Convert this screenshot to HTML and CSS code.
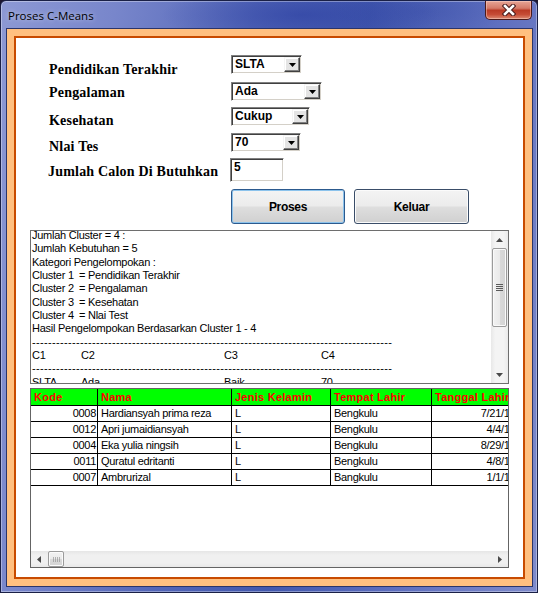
FILE: index.html
```html
<!DOCTYPE html>
<html>
<head>
<meta charset="utf-8">
<title>Proses C-Means</title>
<link rel="stylesheet" href="styles.css">
</head>
<body>
<div class="window">
  <div class="titlebar">
    <span class="title">Proses C-Means</span>
    <div class="close">
      <svg width="14" height="12" viewBox="0 0 14 12">
        <path d="M3 2 L11 10 M11 2 L3 10" stroke="#4a1c1c" stroke-width="4.6" stroke-linecap="square"/>
        <path d="M3 2 L11 10 M11 2 L3 10" stroke="#ffffff" stroke-width="2.6" stroke-linecap="square"/>
      </svg>
    </div>
  </div>
  <div class="client">
    <div class="panel">
      <div class="form">
        <div class="row row-pend">
          <span class="lbl lbl-pend">Pendidikan Terakhir</span>
          <div class="combo combo-slta"><span class="combo-val">SLTA</span><span class="drop"><svg width="7" height="4" viewBox="0 0 7 4"><path d="M0 0H7L3.5 4Z" fill="#000"/></svg></span></div>
        </div>
        <div class="row row-peng">
          <span class="lbl lbl-peng">Pengalaman</span>
          <div class="combo combo-ada"><span class="combo-val">Ada</span><span class="drop"><svg width="7" height="4" viewBox="0 0 7 4"><path d="M0 0H7L3.5 4Z" fill="#000"/></svg></span></div>
        </div>
        <div class="row row-kes">
          <span class="lbl lbl-kes">Kesehatan</span>
          <div class="combo combo-cukup"><span class="combo-val">Cukup</span><span class="drop"><svg width="7" height="4" viewBox="0 0 7 4"><path d="M0 0H7L3.5 4Z" fill="#000"/></svg></span></div>
        </div>
        <div class="row row-nilai">
          <span class="lbl lbl-nilai">Nlai Tes</span>
          <div class="combo combo-70"><span class="combo-val">70</span><span class="drop"><svg width="7" height="4" viewBox="0 0 7 4"><path d="M0 0H7L3.5 4Z" fill="#000"/></svg></span></div>
        </div>
        <div class="row row-jml">
          <span class="lbl lbl-jml">Jumlah Calon Di Butuhkan</span>
          <div class="textbox"><span class="combo-val">5</span></div>
        </div>
      </div>

      <div class="buttons">
        <button class="btn btn-default">Proses</button>
        <button class="btn btn-keluar">Keluar</button>
      </div>

      <div class="memo">
        <div class="memo-text">
          <div class="memo-lines">
            <div>Jumlah Cluster = 4 :</div>
            <div>Jumlah Kebutuhan = 5</div>
            <div>Kategori Pengelompokan :</div>
            <div><span class="tab-cl">Cluster 1</span>= Pendidikan Terakhir</div>
            <div><span class="tab-cl">Cluster 2</span>= Pengalaman</div>
            <div><span class="tab-cl">Cluster 3</span>= Kesehatan</div>
            <div><span class="tab-cl">Cluster 4</span>= Nlai Test</div>
            <div>Hasil Pengelompokan Berdasarkan Cluster 1 - 4</div>
            <div class="dash">------------------------------------------------------------------------------------------</div>
            <div><span class="c1">C1</span><span class="c2">C2</span><span class="c3">C3</span>C4</div>
            <div class="dash">------------------------------------------------------------------------------------------</div>
            <div><span class="c1">SLTA</span><span class="c2">Ada</span><span class="c3">Baik</span>70</div>
          </div>
        </div>
        <div class="vscroll">
          <div class="sb-btn"><svg width="7" height="4" viewBox="0 0 7 4"><path d="M0 4H7L3.5 0Z" fill="#4a4a4a"/></svg></div>
          <div class="vthumb"><span class="grip-v"></span></div>
          <div class="sb-space"></div>
          <div class="sb-btn"><svg width="7" height="4" viewBox="0 0 7 4"><path d="M0 0H7L3.5 4Z" fill="#4a4a4a"/></svg></div>
        </div>
      </div>

      <div class="grid">
        <div class="grid-body">
          <div class="gtable">
            <div class="grow ghead">
              <div class="gc">Kode</div><div class="gc">Nama</div><div class="gc">Jenis Kelamin</div><div class="gc">Tempat Lahir</div><div class="gc">Tanggal Lahir</div>
            </div>
            <div class="grow">
              <div class="gc num">0008</div><div class="gc">Hardiansyah prima reza</div><div class="gc">L</div><div class="gc">Bengkulu</div><div class="gc num">7/21/1990</div>
            </div>
            <div class="grow">
              <div class="gc num">0012</div><div class="gc">Apri jumaidiansyah</div><div class="gc">L</div><div class="gc">Bengkulu</div><div class="gc num">4/4/1991</div>
            </div>
            <div class="grow">
              <div class="gc num">0004</div><div class="gc">Eka yulia ningsih</div><div class="gc">L</div><div class="gc">Bengkulu</div><div class="gc num">8/29/1990</div>
            </div>
            <div class="grow">
              <div class="gc num">0011</div><div class="gc">Quratul edritanti</div><div class="gc">L</div><div class="gc">Bengkulu</div><div class="gc num">4/8/1992</div>
            </div>
            <div class="grow">
              <div class="gc num">0007</div><div class="gc">Ambrurizal</div><div class="gc">L</div><div class="gc">Bangkulu</div><div class="gc num">1/1/1990</div>
            </div>
          </div>
        </div>
        <div class="hscroll">
          <div class="sb-btn-h"><svg width="4" height="7" viewBox="0 0 4 7"><path d="M4 0V7L0 3.5Z" fill="#4a4a4a"/></svg></div>
          <div class="hthumb"><span class="grip-h"></span></div>
          <div class="sb-space"></div>
          <div class="sb-btn-h"><svg width="4" height="7" viewBox="0 0 4 7"><path d="M0 0V7L4 3.5Z" fill="#4a4a4a"/></svg></div>
        </div>
      </div>
    </div>
  </div>
</div>
</body>
</html>
```

FILE: styles.css
```css
* { box-sizing: border-box; }

html, body {
  margin: 0;
  padding: 0;
}

body {
  width: 538px;
  height: 593px;
  overflow: hidden;
  background: #1c1630;
  font-family: "Liberation Sans", Arial, sans-serif;
  color: #000;
}

/* ---------- window frame ---------- */
.window {
  width: 538px;
  height: 593px;
  border: 1px solid #1a2046;
  border-radius: 6px 6px 0 0;
  padding: 0 4px 5px 5px;
  display: flex;
  flex-direction: column;
  background:
    radial-gradient(ellipse 140px 30px at 300px 14px, rgba(40, 60, 160, 0.55), rgba(40, 60, 160, 0) 100%),
    radial-gradient(ellipse 90px 24px at 420px 10px, rgba(60, 80, 170, 0.45), rgba(60, 80, 170, 0) 100%),
    linear-gradient(100deg, #8d99d4 0%, #7886cb 18%, #5366b8 40%, #4258ae 58%, #5e6fbf 78%, #7f8bcb 100%);
  box-shadow: inset 0 0 0 1px rgba(255, 255, 255, 0.35);
}

.titlebar {
  flex: none;
  height: 27px;
  display: flex;
  justify-content: space-between;
  align-items: flex-start;
}

.title {
  font-family: "Open Sans", "Noto Sans", sans-serif;
  font-size: 11.5px;
  line-height: 16px;
  padding: 7px 0 0 2px;
  color: #000;
  text-shadow: 0 0 5px rgba(255, 255, 255, 0.6);
}

.close {
  width: 47px;
  height: 19px;
  margin-right: 1px;
  border: 1px solid #4a1a1a;
  border-top: none;
  border-radius: 0 0 5px 5px;
  background: linear-gradient(#e7a596 0%, #d57a68 40%, #bb3b26 52%, #c64c36 75%, #dc8a72 100%);
  box-shadow: inset 0 0 0 1px rgba(255, 220, 210, 0.45);
  display: flex;
  align-items: center;
  justify-content: center;
}

.client {
  flex: 1;
  min-width: 0;
  border: 1px solid #2b356a;
  background: #ffc080;
  padding: 7px;
  display: flex;
}

.panel {
  flex: 1;
  min-width: 0;
  border: 2px solid #c84b00;
  background: #ffffff;
  padding: 17px 14px 0 14px;
  display: flex;
  flex-direction: column;
}

/* ---------- form ---------- */
.form {
  margin-left: 19px;
  display: flex;
  flex-direction: column;
}

.row {
  display: flex;
  align-items: flex-start;
}

.row-pend { height: 27px; }
.row-peng { height: 25px; }
.row-kes { height: 26px; }
.row-nilai { height: 25px; }
.row-jml { height: 31px; }

.lbl {
  width: 182px;
  flex: none;
  font-family: "Liberation Serif", "Times New Roman", serif;
  font-weight: bold;
  font-size: 14px;
  line-height: 16px;
  letter-spacing: 0.2px;
}

.lbl-pend { padding-top: 7px; }
.lbl-peng { padding-top: 3px; }
.lbl-kes { padding-top: 6px; }
.lbl-nilai { padding-top: 6px; }
.lbl-jml { padding-top: 6px; margin-left: -1px; }

.combo,
.textbox {
  height: 19px;
  background: #fff;
  border: 1px solid;
  border-color: #808080 #ffffff #ffffff #808080;
  box-shadow: inset 1px 1px 0 #404040, inset -1px -1px 0 #d4d0c8;
  display: flex;
  align-items: flex-start;
  padding: 1px;
}

.combo-slta { width: 71px; }
.combo-ada { width: 91px; }
.combo-cukup { width: 79px; }
.combo-70 { width: 70px; }

.textbox {
  width: 54px;
  height: 24px;
}

.combo-val {
  flex: 1;
  font-weight: bold;
  font-size: 12px;
  line-height: 13px;
  padding: 1px 0 0 2px;
}

.drop {
  flex: none;
  width: 16px;
  height: 15px;
  background: #e4e4e4;
  border: 1px solid;
  border-color: #f4f4f4 #404040 #404040 #f4f4f4;
  box-shadow: inset -1px -1px 0 #808080, inset 1px 1px 0 #ffffff;
  display: flex;
  align-items: center;
  justify-content: center;
}

/* ---------- buttons ---------- */
.buttons {
  margin-left: 201px;
  height: 35px;
  display: flex;
  gap: 9px;
  flex: none;
}

.btn {
  height: 35px;
  padding: 0;
  border: 1px solid #3a4d68;
  border-radius: 3px;
  background: linear-gradient(#f4f4f4 0%, #ececec 48%, #dedede 52%, #d0d0d0 100%);
  box-shadow: inset 0 0 0 1px #fbfbfb;
  font-family: "Liberation Sans", Arial, sans-serif;
  font-weight: bold;
  font-size: 12px;
  letter-spacing: -0.3px;
  color: #000;
}

.btn-default {
  width: 114px;
  border-color: #2c5a8e;
  box-shadow: inset 0 0 0 1px #8cc3ec;
}

.btn-keluar {
  width: 115px;
}

/* ---------- memo / textbox ---------- */
.memo {
  flex: none;
  min-width: 0;
  margin-top: 6px;
  height: 154px;
  border: 1px solid #6e6e6e;
  display: flex;
  background: #fff;
}

.memo-text {
  flex: 1;
  min-width: 0;
  overflow: hidden;
  padding-left: 1px;
  font-size: 11px;
  line-height: 13.33px;
  letter-spacing: -0.25px;
  white-space: nowrap;
}

.memo-lines {
  margin-top: -2px;
}

.tab-cl { display: inline-block; width: 47px; }
.c1 { display: inline-block; width: 49px; }
.c2 { display: inline-block; width: 143px; }
.c3 { display: inline-block; width: 97px; }

.dash {
  letter-spacing: 0.34px;
}

/* ---------- scrollbars ---------- */
.vscroll {
  flex: none;
  width: 17px;
  display: flex;
  flex-direction: column;
  background: linear-gradient(90deg, #e8e8e8 0%, #f4f4f4 25%, #f4f4f4 75%, #eaeaea 100%);
}

.sb-btn {
  flex: none;
  height: 17px;
  display: flex;
  align-items: center;
  justify-content: center;
}

.vthumb {
  flex: none;
  height: 79px;
  margin: 0 1px;
  border: 1px solid #9b9b9b;
  border-radius: 2px;
  background: linear-gradient(90deg, #f2f2f2 0%, #eaeaea 50%, #d9d9d9 51%, #d4d4d4 100%);
  box-shadow: inset 0 0 0 1px #fafafa;
  display: flex;
  align-items: center;
  justify-content: center;
}

.grip-v {
  width: 7px;
  height: 7px;
  background: repeating-linear-gradient(#5a5a5a 0px, #5a5a5a 1px, transparent 1px, transparent 2px);
}

.sb-space {
  flex: 1;
}

/* ---------- grid ---------- */
.grid {
  flex: none;
  min-width: 0;
  margin-top: 4px;
  height: 180px;
  border: 1px solid #646464;
  display: flex;
  flex-direction: column;
  overflow: hidden;
  background: #fff;
}

.grid-body {
  flex: 1;
  min-width: 0;
  overflow: hidden;
}

.gtable {
  width: 498px;
}

.grow {
  display: grid;
  grid-template-columns: 67px 134px 99px 101px 97px;
  height: 16px;
  font-size: 11px;
  letter-spacing: -0.3px;
}

.ghead {
  height: 17px;
  background: #00ff00;
  color: #ff0000;
  font-weight: bold;
  letter-spacing: 0.25px;
}

.gc {
  border-right: 1px solid #000;
  border-bottom: 1px solid #000;
  padding: 0 3px;
  line-height: 15px;
  white-space: nowrap;
  overflow: hidden;
}

.ghead .gc {
  line-height: 16px;
}

.gc.num {
  text-align: right;
  padding: 0 1px 0 0;
}

.hscroll {
  flex: none;
  height: 16px;
  display: flex;
  background: linear-gradient(#e6e6e6 0%, #f0f0f0 25%, #f0f0f0 75%, #e8e8e8 100%);
}

.sb-btn-h {
  flex: none;
  width: 16px;
  display: flex;
  align-items: center;
  justify-content: center;
}

.hthumb {
  flex: none;
  width: 16px;
  margin: 0 0 0 1px;
  border: 1px solid #9b9b9b;
  border-radius: 2px;
  background: linear-gradient(#f2f2f2 0%, #eaeaea 50%, #d9d9d9 51%, #d4d4d4 100%);
  box-shadow: inset 0 0 0 1px #fafafa;
  display: flex;
  align-items: center;
  justify-content: center;
}

.grip-h {
  width: 7px;
  height: 5px;
  background: repeating-linear-gradient(90deg, #8a8a8a 0px, #8a8a8a 1px, transparent 1px, transparent 2px);
  opacity: 0.6;
}
```
